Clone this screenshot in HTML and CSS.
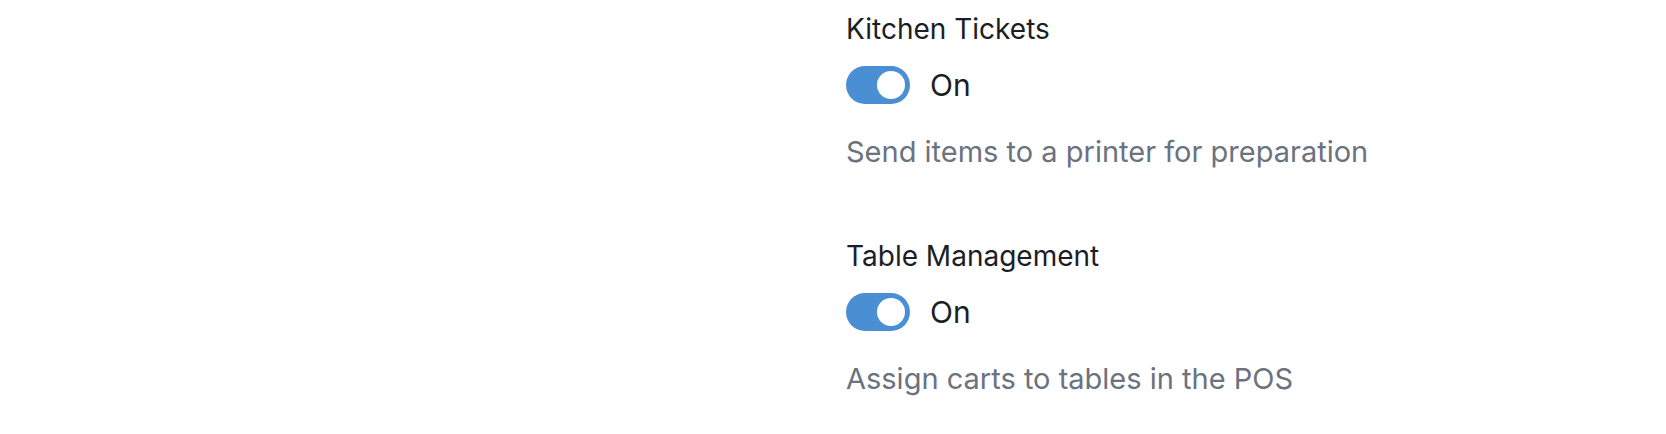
FILE: index.html
```html
<!DOCTYPE html>
<html lang="en">
<head>
    <meta charset="UTF-8">
    <meta name="viewport" content="width=device-width, initial-scale=1.0">
    <title>Settings</title>
    <link rel="stylesheet" href="styles.css">
</head>
<body>
    <div class="settings">
        <div class="side"></div>
        <div class="fields">
            <div class="field">
                <div class="field-label">Kitchen Tickets</div>
                <label class="switch-row">
                    <span class="switch on"><span class="knob"></span></span>
                    <span class="switch-text">On</span>
                </label>
                <p class="field-help">Send items to a printer for preparation</p>
            </div>
            <div class="field">
                <div class="field-label">Table Management</div>
                <label class="switch-row">
                    <span class="switch on"><span class="knob"></span></span>
                    <span class="switch-text">On</span>
                </label>
                <p class="field-help">Assign carts to tables in the POS</p>
            </div>
        </div>
    </div>
</body>
</html>
```

FILE: styles.css
```css
body {
    margin: 0;
    font-family: Inter, "Noto Sans", sans-serif;
    background-color: #fff;
    color: #1b1e25;
}
.settings {
    display: grid;
    grid-template-columns: 1fr 1fr;
    column-gap: 26px;
}
.fields {
    display: flex;
    flex-direction: column;
    gap: 68px;
    padding-top: 11px;
}
.field {
    display: flex;
    flex-direction: column;
    align-items: flex-start;
}
.field-label {
    font-size: 28px;
    line-height: 36px;
}
.switch-row {
    display: flex;
    align-items: center;
    gap: 20px;
    margin-top: 19px;
}
.switch {
    width: 64px;
    height: 38px;
    border-radius: 19px;
    background-color: #4a8fd3;
    display: flex;
    align-items: center;
    justify-content: flex-end;
    padding: 0 5px;
    box-sizing: border-box;
}
.knob {
    width: 28px;
    height: 28px;
    border-radius: 50%;
    background-color: #fff;
}
.switch-text {
    font-size: 30px;
    line-height: 38px;
}
.field-help {
    margin: 30px 0 0;
    font-size: 29px;
    line-height: 36px;
    color: #6b7280;
}
```
